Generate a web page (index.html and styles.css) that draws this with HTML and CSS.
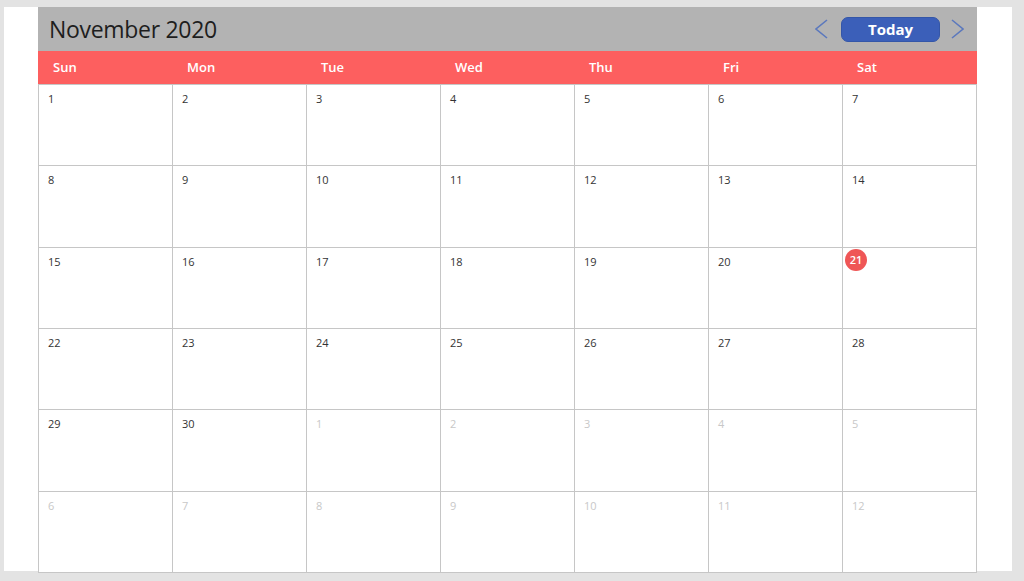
FILE: index.html
```html
<!DOCTYPE html>
<html lang="en">
<head>
<meta charset="utf-8">
<title>Calendar</title>
<link rel="stylesheet" href="styles.css">
</head>
<body>
<div class="panel">
  <div class="calendar">
    <div class="header">
      <div class="title">November 2020</div>
      <div class="nav">
        <svg class="chev chev-prev" width="13" height="20" viewBox="0 0 13 20"><polyline points="12,1 1,10 12,19" fill="none" stroke="#5b78bd" stroke-width="1.6"/></svg>
        <button class="today">Today</button>
        <svg class="chev chev-next" width="13" height="20" viewBox="0 0 13 20"><polyline points="1,1 12,10 1,19" fill="none" stroke="#5b78bd" stroke-width="1.6"/></svg>
      </div>
    </div>
    <div class="weekdays">
      <div class="wd">Sun</div><div class="wd">Mon</div><div class="wd">Tue</div><div class="wd">Wed</div><div class="wd">Thu</div><div class="wd">Fri</div><div class="wd">Sat</div>
    </div>
    <div class="grid">
      <div class="cell"><span class="num">1</span></div>
      <div class="cell"><span class="num">2</span></div>
      <div class="cell"><span class="num">3</span></div>
      <div class="cell"><span class="num">4</span></div>
      <div class="cell"><span class="num">5</span></div>
      <div class="cell"><span class="num">6</span></div>
      <div class="cell"><span class="num">7</span></div>
      <div class="cell"><span class="num">8</span></div>
      <div class="cell"><span class="num">9</span></div>
      <div class="cell"><span class="num">10</span></div>
      <div class="cell"><span class="num">11</span></div>
      <div class="cell"><span class="num">12</span></div>
      <div class="cell"><span class="num">13</span></div>
      <div class="cell"><span class="num">14</span></div>
      <div class="cell"><span class="num">15</span></div>
      <div class="cell"><span class="num">16</span></div>
      <div class="cell"><span class="num">17</span></div>
      <div class="cell"><span class="num">18</span></div>
      <div class="cell"><span class="num">19</span></div>
      <div class="cell"><span class="num">20</span></div>
      <div class="cell"><span class="num current">21</span></div>
      <div class="cell"><span class="num">22</span></div>
      <div class="cell"><span class="num">23</span></div>
      <div class="cell"><span class="num">24</span></div>
      <div class="cell"><span class="num">25</span></div>
      <div class="cell"><span class="num">26</span></div>
      <div class="cell"><span class="num">27</span></div>
      <div class="cell"><span class="num">28</span></div>
      <div class="cell"><span class="num">29</span></div>
      <div class="cell"><span class="num">30</span></div>
      <div class="cell"><span class="num other">1</span></div>
      <div class="cell"><span class="num other">2</span></div>
      <div class="cell"><span class="num other">3</span></div>
      <div class="cell"><span class="num other">4</span></div>
      <div class="cell"><span class="num other">5</span></div>
      <div class="cell"><span class="num other">6</span></div>
      <div class="cell"><span class="num other">7</span></div>
      <div class="cell"><span class="num other">8</span></div>
      <div class="cell"><span class="num other">9</span></div>
      <div class="cell"><span class="num other">10</span></div>
      <div class="cell"><span class="num other">11</span></div>
      <div class="cell"><span class="num other">12</span></div>
    </div>
  </div>
</div>
</body>
</html>
```
FILE: styles.css
```css
* { box-sizing: border-box; }
html, body { margin: 0; padding: 0; }
body {
  background: #e3e3e3;
  font-family: "Open Sans", "Noto Sans", sans-serif;
  width: 1024px;
  height: 581px;
  overflow: hidden;
}
.panel {
  margin: 7px 12px 0 4px;
  background: #ffffff;
  padding: 0 36px 0 34px;
  height: 564px;
}
.calendar {
  width: 939px;
  display: flex;
  flex-direction: column;
}
.header {
  height: 44px;
  background: #b3b3b3;
  display: flex;
  align-items: center;
  justify-content: space-between;
  padding: 0 13px 0 11px;
}
.title {
  font-size: 23px;
  color: #1e1e1e;
  letter-spacing: -0.3px;
}
.nav {
  display: flex;
  align-items: center;
}
.chev { display: block; }
.chev-prev { margin-right: 13px; }
.chev-next { margin-left: 11px; }
.today {
  width: 99px;
  height: 25px;
  border: 1px solid #3456a8;
  border-radius: 7px;
  background: #3b5fb9;
  color: #ffffff;
  font-family: "Open Sans", sans-serif;
  font-weight: 700;
  font-size: 15px;
  line-height: 21px;
  padding: 0;
  margin-top: 0;
}
.weekdays {
  height: 33px;
  background: #fd5f5f;
  display: grid;
  grid-template-columns: repeat(7, 134px);
}
.wd {
  color: #ffffff;
  font-size: 13px;
  font-weight: 600;
  padding-left: 15px;
  line-height: 33px;
}
.grid {
  height: 489px;
  background: #c6c6c6;
  display: grid;
  grid-template-columns: repeat(7, 133px);
  grid-template-rows: repeat(6, 1fr);
  gap: 1px;
  padding: 1px;
}
.cell {
  background: #ffffff;
  padding: 1px 0 0 9px;
  position: relative;
}
.num {
  font-size: 11px;
  color: #333333;
  line-height: 15px;
}
.num.other { color: #c8c8c8; }
.num.current {
  position: absolute;
  top: 1px;
  left: 2px;
  width: 22px;
  height: 22px;
  border-radius: 50%;
  background: #ef5656;
  color: #ffffff;
  font-weight: 600;
  display: flex;
  align-items: center;
  justify-content: center;
}
```
